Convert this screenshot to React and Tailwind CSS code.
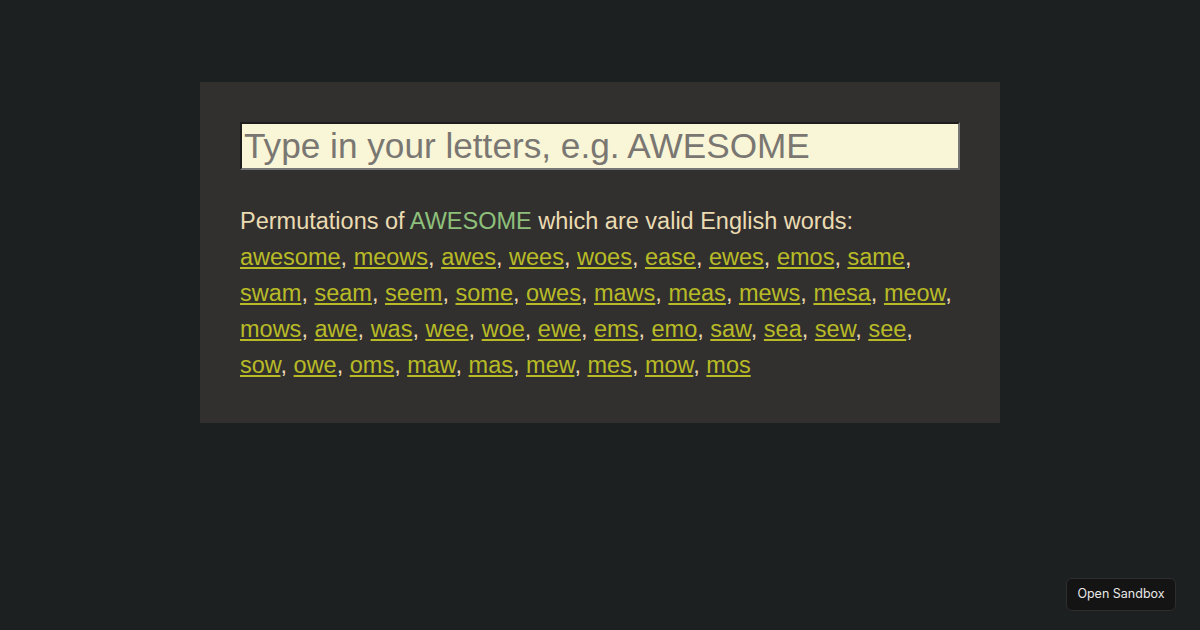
const words = [
  'awesome', 'meows', 'awes', 'wees', 'woes', 'ease', 'ewes', 'emos', 'same',
  'swam', 'seam', 'seem', 'some', 'owes', 'maws', 'meas', 'mews', 'mesa', 'meow',
  'mows', 'awe', 'was', 'wee', 'woe', 'ewe', 'ems', 'emo', 'saw', 'sea', 'sew', 'see',
  'sow', 'owe', 'oms', 'maw', 'mas', 'mew', 'mes', 'mow', 'mos',
];

export default function App() {
  return (
    <div className="min-h-[630px] bg-[#1d2021] pt-[82px] font-['Liberation_Sans',Arial,sans-serif]">
      <div className="mx-auto w-[800px] bg-[#32302f] p-10">
        <input
          type="text"
          placeholder="Type in your letters, e.g. AWESOME"
          className="block h-12 w-full border-2 border-t-[#1d1d1d] border-l-[#1d1d1d] border-r-[#767676] border-b-[#767676] bg-[#f9f5d7] px-[2px] text-[35.2px] text-[#3c3836] outline-none placeholder:text-[#7a7772]"
        />
        <div className="mt-[33px] text-[23.5px] leading-9 text-[#ebdbb2]">
          <div>
            Permutations of <span className="text-[#8ec07c]">AWESOME</span> which are valid English words:
          </div>
          <div>
            {words.map((w, i) => (
              <span key={w}>
                <a href="#" className="text-[#b8bb26] underline">{w}</a>
                {i < words.length - 1 ? ', ' : ''}
              </span>
            ))}
          </div>
        </div>
      </div>
      <button className="fixed bottom-[19px] right-[24px] flex h-[33px] w-[110px] items-center justify-center rounded-md border border-[#2e2e2e] bg-[#141414] font-['Inter',sans-serif] text-[12.5px] text-[#e8e8e8]">
        Open Sandbox
      </button>
    </div>
  );
}
